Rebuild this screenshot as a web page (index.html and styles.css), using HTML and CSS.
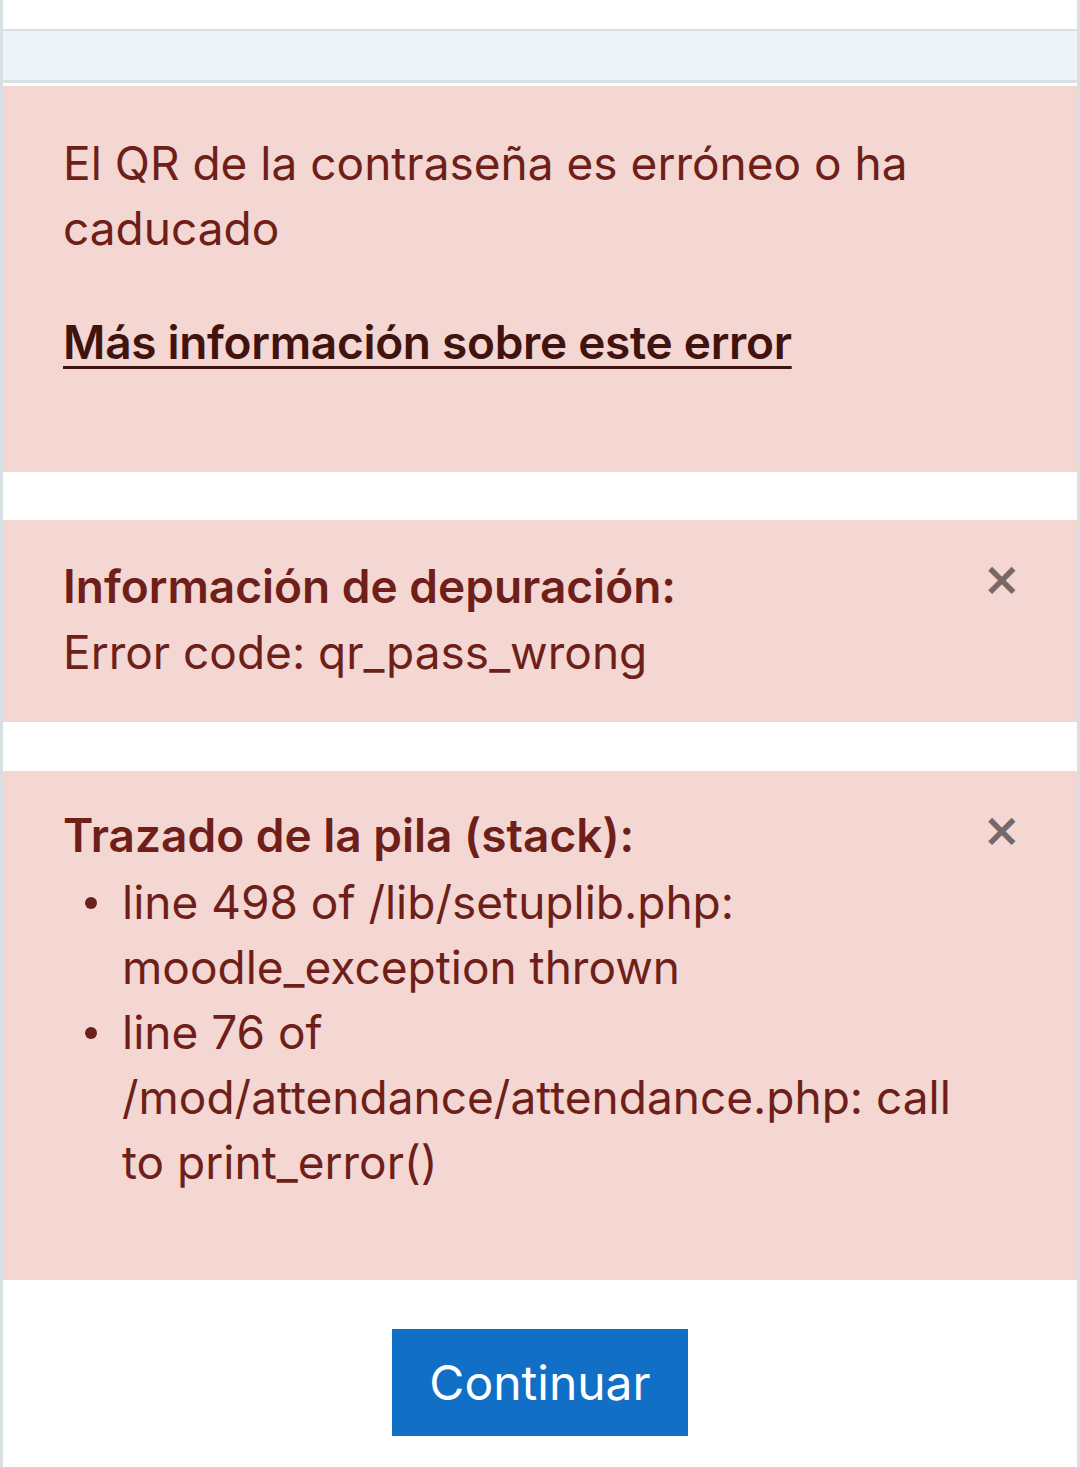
FILE: index.html
```html
<!DOCTYPE html>
<html lang="es">
<head>
<meta charset="utf-8">
<link rel="stylesheet" href="styles.css">
<title>Error</title>
</head>
<body>
<div class="frame">
  <div class="topbox"></div>
  <div class="band"></div>
  <div class="content">
    <div class="alert alert-main">
      <p class="msg">El QR de la contraseña es erróneo o ha caducado</p>
      <p class="more"><a href="#" class="alert-link">Más información sobre este error</a></p>
    </div>
    <div class="alert alert-debug">
      <button class="close" type="button" aria-label="Cerrar">&times;</button>
      <p class="title">Información de depuración:</p>
      <p class="line">Error code: qr_pass_wrong</p>
    </div>
    <div class="alert alert-stack">
      <button class="close" type="button" aria-label="Cerrar">&times;</button>
      <p class="title">Trazado de la pila (stack):</p>
      <ul class="trace">
        <li>line 498 of /lib/setuplib.php: moodle_exception thrown</li>
        <li>line 76 of /mod/attendance/attendance.php: call to print_error()</li>
      </ul>
    </div>
    <div class="actions">
      <button class="btn" type="button">Continuar</button>
    </div>
  </div>
</div>
</body>
</html>
```

FILE: styles.css
```css
html, body {
  margin: 0;
  padding: 0;
  background: #ffffff;
}
body {
  font-family: Inter, "Noto Sans", sans-serif;
  color: #6e1f19;
}
.frame {
  width: 1080px;
  height: 1467px;
  box-sizing: border-box;
  border-left: 3px solid #d8e0e4;
  border-right: 3px solid #d8e0e4;
  overflow: hidden;
}
.topbox {
  height: 29px;
  border-bottom: 2px solid #d8e0e4;
  background: #ffffff;
}
.band {
  height: 49px;
  background: #ecf4f8;
  border-bottom: 3px solid #d8e0e4;
}
.content {
  padding-top: 3px;
}
.alert {
  position: relative;
  background: #f4d6d3;
  box-sizing: border-box;
  padding: 0 67px 0 60px;
}
.alert p {
  margin: 0;
}
.alert-main {
  height: 386px;
  padding-top: 45px;
}
.msg {
  font-size: 46px;
  line-height: 65px;
  font-weight: 400;
}
.more {
  margin-top: 49px !important;
  font-size: 46px;
  line-height: 65px;
}
.alert-link {
  color: #41130f;
  font-weight: 600;
  letter-spacing: -0.3px;
  text-decoration: underline;
  text-decoration-thickness: 3px;
  text-underline-offset: 7px;
}
.alert-debug {
  margin-top: 48px;
  height: 202px;
  padding-top: 34px;
}
.alert-stack {
  margin-top: 49px;
  height: 509px;
  padding-top: 32px;
  padding-right: 80px;
}
.title {
  font-size: 46px;
  line-height: 65px;
  font-weight: 600;
}
.line {
  font-size: 46px;
  line-height: 67px;
}
.trace {
  margin: 2px 0 0 0;
  padding-left: 59px;
  list-style: none;
  font-size: 46px;
  line-height: 65px;
}
.trace li {
  position: relative;
}
.trace li::before {
  content: "";
  position: absolute;
  left: -37px;
  top: 27px;
  width: 12px;
  height: 12px;
  border-radius: 50%;
  background: #6e1f19;
}
.close {
  position: absolute;
  right: 56px;
  top: 36px;
  background: none;
  border: 0;
  padding: 0;
  font-family: "DejaVu Sans", sans-serif;
  font-size: 46px;
  line-height: 46px;
  font-weight: 700;
  color: #776766;
  cursor: pointer;
}
.alert-stack .close {
  right: 56px;
}
.actions {
  display: flex;
  justify-content: center;
  padding-top: 49px;
}
.btn {
  width: 296px;
  height: 107px;
  background: #1170c6;
  color: #ffffff;
  border: 0;
  border-radius: 0;
  font-family: Inter, "Noto Sans", sans-serif;
  font-size: 48px;
  font-weight: 400;
}
```
